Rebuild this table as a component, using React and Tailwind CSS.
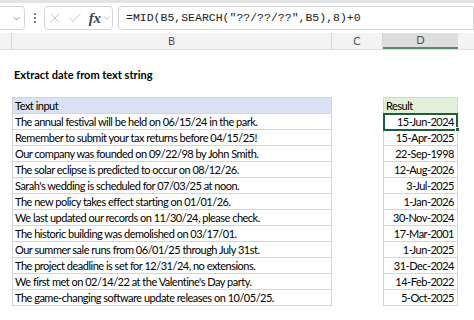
import { Check, ChevronDown, X } from "lucide-react";

const rows = [
  ["The annual festival will be held on 06/15/24 in the park.", "15-Jun-2024"],
  ["Remember to submit your tax returns before 04/15/25!", "15-Apr-2025"],
  ["Our company was founded on 09/22/98 by John Smith.", "22-Sep-1998"],
  ["The solar eclipse is predicted to occur on 08/12/26.", "12-Aug-2026"],
  ["Sarah's wedding is scheduled for 07/03/25 at noon.", "3-Jul-2025"],
  ["The new policy takes effect starting on 01/01/26.", "1-Jan-2026"],
  ["We last updated our records on 11/30/24, please check.", "30-Nov-2024"],
  ["The historic building was demolished on 03/17/01.", "17-Mar-2001"],
  ["Our summer sale runs from 06/01/25 through July 31st.", "1-Jun-2025"],
  ["The project deadline is set for 12/31/24, no extensions.", "31-Dec-2024"],
  ["We first met on 02/14/22 at the Valentine's Day party.", "14-Feb-2022"],
  ["The game-changing software update releases on 10/05/25.", "5-Oct-2025"],
];

export default function App() {
  return (
    <div className="w-[474px] h-[320px] overflow-hidden bg-white font-['Lato',sans-serif] text-black">
      {/* top strip */}
      <div className="h-[3px] bg-[#e3e3e3]" />

      {/* formula bar */}
      <div className="h-[30px] flex items-center bg-white">
        <div className="ml-[-6px] w-[31px] h-[24px] border border-[#d6d6d6] rounded-[4px] flex items-center justify-end pr-[2px]">
          <ChevronDown size={11} strokeWidth={1.5} className="text-[#666]" />
        </div>
        <div className="w-[19px] flex flex-col items-center gap-[2px]">
          <span className="w-[2px] h-[2px] bg-[#555] rounded-full" />
          <span className="w-[2px] h-[2px] bg-[#555] rounded-full" />
          <span className="w-[2px] h-[2px] bg-[#555] rounded-full" />
        </div>
        <div className="w-[69px] h-[24px] border border-[#d6d6d6] rounded-[4px] flex items-center pl-[2px] text-[#b5b5b5]">
          <X size={16} strokeWidth={1.2} />
          <Check size={16} strokeWidth={1.2} className="ml-[4px]" />
          <span className="ml-[6px] font-['Liberation_Serif',serif] italic font-bold text-[15px] text-[#444] leading-none">fx</span>
          <ChevronDown size={10} strokeWidth={1.5} className="ml-[1px] text-[#999]" />
        </div>
        <div className="ml-[5px] flex-1 h-[24px] border border-[#d6d6d6] rounded-l-[4px] flex items-center pl-[7px] font-['Liberation_Mono',monospace] text-[11.5px] text-[#222] whitespace-nowrap">
          =MID(B5,SEARCH("??/??/??",B5),8)+0
        </div>
      </div>

      {/* column headers */}
      <div className="h-[17px] flex bg-[#f3f3f3] border-b border-[#dcdcdc] text-[11px] text-[#555]">
        <div className="w-[12px] border-r border-[#d6d6d6]" />
        <div className="w-[320px] flex items-center justify-center border-r border-[#d6d6d6]">B</div>
        <div className="w-[51px] flex items-center justify-center border-r border-[#d6d6d6]">C</div>
        <div className="w-[75px] flex items-center justify-center bg-[#dedede] border-b-2 border-[#5c8a6c]">D</div>
      </div>

      {/* sheet */}
      <div className="pt-[17px]">
        <div className="pl-[14px] h-[16px] flex items-center text-[11px] font-bold">
          Extract date from text string
        </div>

        <div className="mt-[14px] flex text-[11px] tracking-[-0.5px] leading-none whitespace-nowrap">
          <div className="ml-[12px] w-[320px] border-l border-t border-r border-[#d4d4d4]">
            <div className="h-[16px] flex items-center pl-[2px] bg-[#d9e1f2] border-b border-[#d4d4d4]">Text input</div>
            {rows.map((r) => (
              <div key={r[0]} className="h-[16px] flex items-center pl-[2px] border-b border-[#d4d4d4]">
                {r[0]}
              </div>
            ))}
          </div>

          <div className="ml-[51px] w-[75px] border-l border-t border-r border-[#d4d4d4]">
            <div className="h-[16px] flex items-center pl-[2px] bg-[#e2efda] border-b border-[#d4d4d4]">Result</div>
            {rows.map((r, i) => (
              <div
                key={r[1]}
                className={
                  i === 0
                    ? "relative h-[16px] flex items-center justify-end pr-[3px] border-b border-[#d4d4d4] outline-2 outline-[#1f5c3a] -outline-offset-1"
                    : "h-[16px] flex items-center justify-end pr-[3px] border-b border-[#d4d4d4]"
                }
              >
                {r[1]}
                {i === 0 && (
                  <span className="absolute right-[-3px] bottom-[-3px] w-[5px] h-[5px] bg-[#1f5c3a] border border-white" />
                )}
              </div>
            ))}
          </div>
        </div>
      </div>
    </div>
  );
}
